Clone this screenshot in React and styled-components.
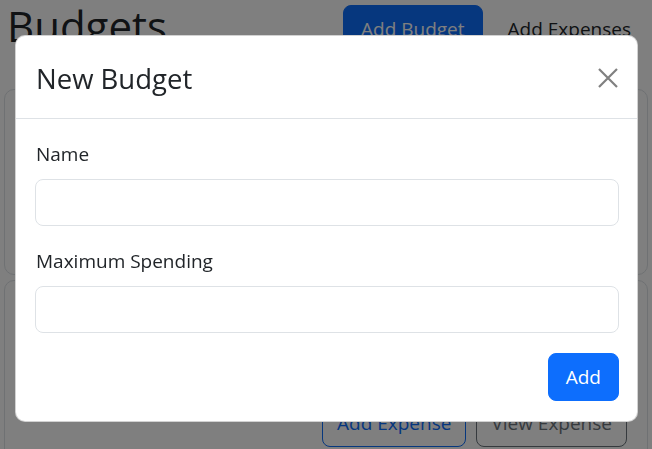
import React from "react";
import styled, { createGlobalStyle } from "styled-components";

const Global = createGlobalStyle`
  html, body { margin: 0; padding: 0; background: #fff; }
  body { font-family: "Open Sans", "Noto Sans", sans-serif; color: #212529; overflow: hidden; }
  * { box-sizing: border-box; }
`;

const Page = styled.div`
  width: 652px;
  height: 449px;
  padding: 0 4px;
  overflow: hidden;
`;

const TopBar = styled.div`
  display: flex;
  align-items: flex-start;
  gap: 12px;
  padding: 5px 4px 0 0;
  height: 89px;
`;

const Heading = styled.h1`
  margin: -4px auto 0 3px;
  font-size: 42px;
  font-weight: 500;
  line-height: 1.2;
`;

const Btn = styled.button`
  height: 48px;
  padding: 0 ${(p) => p.$px || 16}px;
  border-radius: 8px;
  font-family: inherit;
  font-size: 19px;
  line-height: 1;
  border: 1px solid ${(p) => (p.$variant === "primary" ? "#0d6efd" : p.$variant === "outline-primary" ? "#0d6efd" : p.$variant === "outline-secondary" ? "#6c757d" : "transparent")};
  background: ${(p) => (p.$variant === "primary" ? "#0d6efd" : "transparent")};
  color: ${(p) => (p.$variant === "primary" ? "#fff" : p.$variant === "outline-primary" ? "#0d6efd" : p.$variant === "outline-secondary" ? "#6c757d" : "#212529")};
`;

const Cards = styled.div`
  display: grid;
  gap: 5px;
`;

const Card = styled.div`
  border: 1px solid #dee2e6;
  border-radius: 10px;
  height: ${(p) => p.$h}px;
  padding: 20px;
  display: flex;
  flex-direction: column;
  justify-content: flex-end;
`;

const CardActions = styled.div`
  display: flex;
  justify-content: flex-end;
  gap: 10px;
`;

const Backdrop = styled.div`
  position: fixed;
  inset: 0;
  background: rgba(0, 0, 0, 0.5);
`;

const Modal = styled.div`
  position: fixed;
  top: 35px;
  left: 15px;
  width: 623px;
  background: #fff;
  border: 1px solid rgba(0, 0, 0, 0.175);
  border-radius: 10px;
  overflow: hidden;
`;

const ModalHeader = styled.div`
  height: 83px;
  display: flex;
  align-items: center;
  justify-content: space-between;
  padding: 0 17px 0 20px;
  border-bottom: 1px solid #dee2e6;
`;

const ModalTitle = styled.div`
  font-size: 27.5px;
  font-weight: 500;
  line-height: 1.5;
  margin-top: 3px;
`;

const CloseButton = styled.button`
  width: 24px;
  height: 24px;
  padding: 0;
  border: 0;
  background: transparent;
  display: flex;
  align-items: center;
  justify-content: center;
  margin-top: 1px;
`;

const ModalBody = styled.div`
  padding: 20px 18px 20px 19px;
`;

const FormGroup = styled.div`
  margin-bottom: 20px;
`;

const Label = styled.label`
  display: block;
  font-size: 19px;
  line-height: 30px;
  margin: 0 0 10px 1px;
`;

const Input = styled.input`
  display: block;
  width: 100%;
  height: 47px;
  border: 1px solid #dee2e6;
  border-radius: 8px;
  font-family: inherit;
  font-size: 19px;
  padding: 0 15px;
  outline: none;
`;

const Footer = styled.div`
  display: flex;
  justify-content: flex-end;
`;

export default function App() {
  return (
    <>
      <Global />
      <Page>
        <TopBar>
          <Heading>Budgets</Heading>
          <Btn $variant="primary" $px={17}>Add Budget</Btn>
          <Btn $variant="text" $px={12}>Add Expenses</Btn>
        </TopBar>
        <Cards>
          <Card $h={186} />
          <Card $h={188}>
            <CardActions>
              <Btn $variant="outline-primary" $px={14}>Add Expense</Btn>
              <Btn $variant="outline-secondary" $px={14}>View Expense</Btn>
            </CardActions>
          </Card>
        </Cards>
      </Page>
      <Backdrop />
      <Modal>
        <ModalHeader>
          <ModalTitle>New Budget</ModalTitle>
          <CloseButton aria-label="Close">
            <svg width="20" height="20" viewBox="0 0 20 20">
              <path d="M1 1L19 19M19 1L1 19" stroke="#808080" strokeWidth="2.2" fill="none" />
            </svg>
          </CloseButton>
        </ModalHeader>
        <ModalBody>
          <FormGroup>
            <Label>Name</Label>
            <Input type="text" />
          </FormGroup>
          <FormGroup>
            <Label>Maximum Spending</Label>
            <Input type="number" />
          </FormGroup>
          <Footer>
            <Btn $variant="primary" $px={17}>Add</Btn>
          </Footer>
        </ModalBody>
      </Modal>
    </>
  );
}
